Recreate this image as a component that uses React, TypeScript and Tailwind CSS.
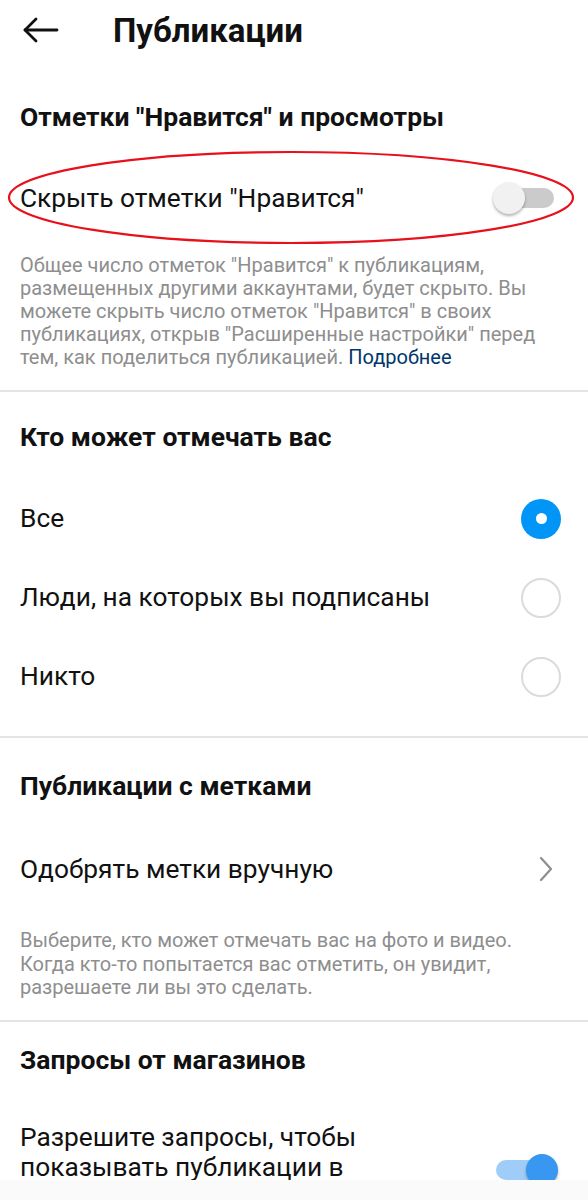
import React from "react";

function Radio({ on }: { on: boolean }) {
  if (on) {
    return (
      <div className="flex h-[40px] w-[40px] items-center justify-center rounded-full bg-[#0095f6]">
        <div className="h-[11px] w-[11px] rounded-full bg-white" />
      </div>
    );
  }
  return <div className="h-[40px] w-[40px] rounded-full border-2 border-[#dbdbdb]" />;
}

function Toggle({ on }: { on: boolean }) {
  return (
    <div className="relative h-[32px] w-[66px]">
      <div
        className={`absolute left-[4px] top-[6px] h-[20px] w-[57px] rounded-full ${
          on ? "bg-[#a0cdf7]" : "bg-[#cbcbcb]"
        }`}
      />
      <div
        className={`absolute top-0 h-[32px] w-[32px] rounded-full shadow-[0_2px_3px_rgba(0,0,0,0.3)] ${
          on ? "right-0 bg-[#3897f0]" : "left-0 bg-[#f1f1f1]"
        }`}
      />
    </div>
  );
}

function Heading({ children }: { children: React.ReactNode }) {
  return <h2 className="px-5 text-[26.5px] font-bold leading-[30px] text-[#111]">{children}</h2>;
}

function Divider() {
  return <div className="h-[2px] w-full bg-[#e4e4e4]" />;
}

const opcoes = [
  { label: "Все", on: true },
  { label: "Люди, на которых вы подписаны", on: false },
  { label: "Никто", on: false },
];

export default function App() {
  return (
    <div className="h-[1200px] w-[588px] overflow-hidden bg-white font-['Roboto',sans-serif] text-[#111]">
      <div className="h-[1180px] overflow-hidden">
        {/* Шапка */}
        <header className="flex h-[60px] items-center">
          <div className="flex w-[113px] pl-[22px]">
            <svg width="37" height="26" viewBox="0 0 37 26" fill="none" stroke="#111" strokeWidth="2.8" strokeLinecap="round" strokeLinejoin="round">
              <path d="M35 13H3" />
              <path d="M14 2L3 13l11 11" />
            </svg>
          </div>
          <h1 className="text-[33px] font-bold leading-none">Публикации</h1>
        </header>

        {/* Отметки Нравится */}
        <div className="pt-[42px]">
          <Heading>Отметки "Нравится" и просмотры</Heading>
        </div>
        <div className="relative mt-[36px] flex h-[60px] items-center justify-between pl-5 pr-[29px]">
          <span className="text-[26.3px] leading-none">Скрыть отметки "Нравится"</span>
          <Toggle on={false} />
          <svg className="pointer-events-none absolute left-[6px] top-[-19px]" width="570" height="97" viewBox="0 0 570 97" fill="none">
            <ellipse cx="285" cy="48.5" rx="282" ry="45.5" stroke="#e8101a" strokeWidth="2.2" />
          </svg>
        </div>
        <p className="px-5 pb-[21px] pt-[26px] text-[20px] leading-[23px] text-[#8e8e8e]">
          Общее число отметок "Нравится" к публикациям,
          <br />
          размещенных другими аккаунтами, будет скрыто. Вы
          <br />
          можете скрыть число отметок "Нравится" в своих
          <br />
          публикациях, открыв "Расширенные настройки" перед
          <br />
          тем, как поделиться публикацией. <span className="text-[#00376b]">Подробнее</span>
        </p>
        <Divider />

        {/* Кто может отмечать */}
        <div className="pt-[30px]">
          <Heading>Кто может отмечать вас</Heading>
        </div>
        <div className="pt-[27px]">
          {opcoes.map((o) => (
            <div key={o.label} className="flex h-[79px] items-center justify-between pl-5 pr-[27px]">
              <span className="text-[26.3px] leading-none">{o.label}</span>
              <Radio on={o.on} />
            </div>
          ))}
        </div>
        <div className="pt-[20px]">
          <Divider />
        </div>

        {/* Публикации с метками */}
        <div className="pt-[33px]">
          <Heading>Публикации с метками</Heading>
        </div>
        <div className="mt-[38px] flex h-[60px] items-center justify-between pl-5 pr-[35px]">
          <span className="text-[26.3px] leading-none">Одобрять метки вручную</span>
          <svg width="14" height="26" viewBox="0 0 14 26" fill="none" stroke="#8e8e8e" strokeWidth="2.2" strokeLinecap="round" strokeLinejoin="round">
            <path d="M2 2l10 11L2 24" />
          </svg>
        </div>
        <p className="px-5 pb-[20px] pt-[30px] text-[20px] leading-[23.5px] text-[#8e8e8e]">
          Выберите, кто может отмечать вас на фото и видео.
          <br />
          Когда кто-то попытается вас отметить, он увидит,
          <br />
          разрешаете ли вы это сделать.
        </p>
        <Divider />

        {/* Запросы от магазинов */}
        <div className="pt-[23px]">
          <Heading>Запросы от магазинов</Heading>
        </div>
        <div className="mt-[47px] flex items-start justify-between pl-5 pr-[30px]">
          <span className="text-[26.3px] leading-[30px]">
            Разрешите запросы, чтобы
            <br />
            показывать публикации в
          </span>
          <div className="mt-[32px]">
            <Toggle on={true} />
          </div>
        </div>
      </div>
      <div className="h-[20px] bg-[#fafafa]" />
    </div>
  );
}
